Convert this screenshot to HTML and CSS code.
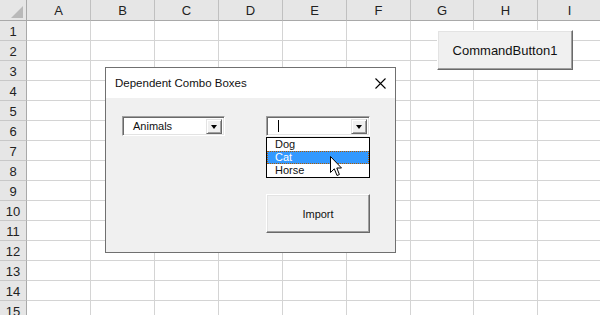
FILE: index.html
```html
<!DOCTYPE html>
<html>
<head>
<meta charset="utf-8">
<link rel="stylesheet" href="styles.css">
</head>
<body>
<div class="sheet">
  <div class="row head">
    <div class="corner"><span class="tri"></span></div>
    <div class="ch">A</div><div class="ch">B</div><div class="ch">C</div><div class="ch">D</div><div class="ch">E</div><div class="ch">F</div><div class="ch">G</div><div class="ch">H</div><div class="ch">I</div>
  </div>
  <div class="row"><div class="rh">1</div><div class="c"></div><div class="c"></div><div class="c"></div><div class="c"></div><div class="c"></div><div class="c"></div><div class="c"></div><div class="c"></div><div class="c"></div></div>
  <div class="row"><div class="rh">2</div><div class="c"></div><div class="c"></div><div class="c"></div><div class="c"></div><div class="c"></div><div class="c"></div><div class="c"></div><div class="c"></div><div class="c"></div></div>
  <div class="row"><div class="rh">3</div><div class="c"></div><div class="c"></div><div class="c"></div><div class="c"></div><div class="c"></div><div class="c"></div><div class="c"></div><div class="c"></div><div class="c"></div></div>
  <div class="row"><div class="rh">4</div><div class="c"></div><div class="c"></div><div class="c"></div><div class="c"></div><div class="c"></div><div class="c"></div><div class="c"></div><div class="c"></div><div class="c"></div></div>
  <div class="row"><div class="rh">5</div><div class="c"></div><div class="c"></div><div class="c"></div><div class="c"></div><div class="c"></div><div class="c"></div><div class="c"></div><div class="c"></div><div class="c"></div></div>
  <div class="row"><div class="rh">6</div><div class="c"></div><div class="c"></div><div class="c"></div><div class="c"></div><div class="c"></div><div class="c"></div><div class="c"></div><div class="c"></div><div class="c"></div></div>
  <div class="row"><div class="rh">7</div><div class="c"></div><div class="c"></div><div class="c"></div><div class="c"></div><div class="c"></div><div class="c"></div><div class="c"></div><div class="c"></div><div class="c"></div></div>
  <div class="row"><div class="rh">8</div><div class="c"></div><div class="c"></div><div class="c"></div><div class="c"></div><div class="c"></div><div class="c"></div><div class="c"></div><div class="c"></div><div class="c"></div></div>
  <div class="row"><div class="rh">9</div><div class="c"></div><div class="c"></div><div class="c"></div><div class="c"></div><div class="c"></div><div class="c"></div><div class="c"></div><div class="c"></div><div class="c"></div></div>
  <div class="row"><div class="rh">10</div><div class="c"></div><div class="c"></div><div class="c"></div><div class="c"></div><div class="c"></div><div class="c"></div><div class="c"></div><div class="c"></div><div class="c"></div></div>
  <div class="row"><div class="rh">11</div><div class="c"></div><div class="c"></div><div class="c"></div><div class="c"></div><div class="c"></div><div class="c"></div><div class="c"></div><div class="c"></div><div class="c"></div></div>
  <div class="row"><div class="rh">12</div><div class="c"></div><div class="c"></div><div class="c"></div><div class="c"></div><div class="c"></div><div class="c"></div><div class="c"></div><div class="c"></div><div class="c"></div></div>
  <div class="row"><div class="rh">13</div><div class="c"></div><div class="c"></div><div class="c"></div><div class="c"></div><div class="c"></div><div class="c"></div><div class="c"></div><div class="c"></div><div class="c"></div></div>
  <div class="row"><div class="rh">14</div><div class="c"></div><div class="c"></div><div class="c"></div><div class="c"></div><div class="c"></div><div class="c"></div><div class="c"></div><div class="c"></div><div class="c"></div></div>
  <div class="row"><div class="rh">15</div><div class="c"></div><div class="c"></div><div class="c"></div><div class="c"></div><div class="c"></div><div class="c"></div><div class="c"></div><div class="c"></div><div class="c"></div></div>

  <button class="cmdbtn">CommandButton1</button>

  <div class="dialog">
    <div class="titlebar">
      <span class="title">Dependent Combo Boxes</span>
      <svg class="close" width="11" height="11" viewBox="0 0 11 11"><path d="M0.5 0.5 L10.5 10.5 M10.5 0.5 L0.5 10.5" stroke="#000" stroke-width="1.1" fill="none"/></svg>
    </div>
    <div class="body">
      <div class="col">
        <div class="combo">
          <span class="val">Animals</span>
          <span class="drop"><span class="arrow"></span></span>
        </div>
      </div>
      <div class="col">
        <div class="combo open">
          <span class="val"><span class="caret"></span></span>
          <span class="drop"><span class="arrow"></span></span>
          <ul class="list">
            <li>Dog</li>
            <li class="sel">Cat</li>
            <li>Horse</li>
          </ul>
          <svg class="pointer" width="13" height="21" viewBox="0 0 13 21"><path d="M0.5 0.5 L0.5 16.5 L4.3 12.8 L7 19.5 L9.4 18.5 L6.8 12 L11.5 12 Z" fill="#fff" stroke="#000" stroke-width="1" stroke-linejoin="miter"/></svg>
        </div>
        <button class="import">Import</button>
      </div>
    </div>
  </div>
</div>
</body>
</html>
```

FILE: styles.css
```css
html, body {
  margin: 0;
  padding: 0;
  background: #fff;
  overflow: hidden;
}
.sheet {
  position: relative;
  width: 600px;
  height: 315px;
  overflow: hidden;
  font-family: "Liberation Sans", Arial, sans-serif;
}
.row {
  display: grid;
  grid-template-columns: 27px repeat(6, 64px) 63px 64px 64px;
  height: 20px;
}
.row.head {
  height: 21px;
}
.c {
  box-sizing: border-box;
  border-right: 1px solid #d4d4d4;
  border-bottom: 1px solid #d4d4d4;
}
.ch, .corner, .rh {
  box-sizing: border-box;
  background: #e6e6e6;
  color: #222;
  font-size: 13px;
  display: flex;
  align-items: center;
  justify-content: center;
}
.ch {
  border-right: 1px solid #c0c0c0;
  border-bottom: 1px solid #a9a9a9;
  padding-top: 1px;
}
.corner {
  position: relative;
  border-right: 1px solid #a9a9a9;
  border-bottom: 1px solid #a9a9a9;
}
.tri {
  position: absolute;
  right: 3px;
  bottom: 2px;
  width: 0;
  height: 0;
  border-left: 12px solid transparent;
  border-bottom: 12px solid #b9b9b9;
}
.rh {
  border-right: 1px solid #a9a9a9;
  border-bottom: 1px solid #c8c8c8;
  padding-top: 1px;
}

.cmdbtn {
  position: absolute;
  left: 437px;
  top: 30px;
  width: 136px;
  height: 40px;
  margin: 0;
  padding: 0;
  box-sizing: border-box;
  background: #f0f0f0;
  border: 1px solid;
  border-color: #fff #6a6a6a #6a6a6a #fff;
  box-shadow: inset -1px -1px 0 #a0a0a0, inset 1px 1px 0 #e3e3e3;
  font-family: "Liberation Sans", Arial, sans-serif;
  font-size: 13px;
  color: #111;
}

.dialog {
  position: absolute;
  left: 105px;
  top: 67px;
  width: 291px;
  height: 186px;
  box-sizing: border-box;
  border: 1px solid #707070;
  background: #f0f0f0;
  display: flex;
  flex-direction: column;
}
.titlebar {
  height: 30px;
  background: #fff;
  display: flex;
  align-items: center;
  justify-content: space-between;
  padding: 0 9px 0 9px;
}
.title {
  font-size: 11.5px;
  color: #111;
}
.close {
  display: block;
  margin-right: 0px;
}
.body {
  flex: 1;
  display: flex;
  gap: 41px;
  padding: 18px 0 0 16px;
}
.col {
  display: flex;
  flex-direction: column;
  width: 104px;
}
.col:first-child {
  width: 103px;
}
.combo {
  position: relative;
  height: 20px;
  box-sizing: border-box;
  background: #fff;
  border: 1px solid;
  border-color: #a0a0a0 #fff #fff #a0a0a0;
  box-shadow: inset 1px 1px 0 #696969, inset -1px -1px 0 #e3e3e3;
  display: flex;
  align-items: center;
  font-size: 11px;
  color: #111;
}
.val {
  flex: 1;
  padding-left: 10px;
  display: flex;
  align-items: center;
}
.caret {
  display: block;
  width: 1px;
  height: 12px;
  background: #000;
  margin-left: 1px;
}
.drop {
  width: 16px;
  height: 15px;
  box-sizing: border-box;
  margin-right: 2px;
  background: #f0f0f0;
  border: 1px solid;
  border-color: #e3e3e3 #696969 #696969 #e3e3e3;
  box-shadow: inset 1px 1px 0 #fff, inset -1px -1px 0 #a0a0a0;
  display: flex;
  align-items: center;
  justify-content: center;
}
.arrow {
  width: 0;
  height: 0;
  border-left: 3.5px solid transparent;
  border-right: 3.5px solid transparent;
  border-top: 4px solid #000;
  margin-top: 1px;
}
.list {
  position: absolute;
  left: -1px;
  top: 20px;
  width: 104px;
  box-sizing: border-box;
  margin: 0;
  padding: 0;
  list-style: none;
  background: #fff;
  border: 1px solid #000;
  font-size: 11px;
  color: #111;
}
.list li {
  height: 13px;
  line-height: 13px;
  padding-left: 8px;
  box-sizing: border-box;
}
.list li.sel {
  background: #3399ff;
  color: #fff;
  border: 1px dotted #b05a00;
  line-height: 11px;
  padding-left: 7px;
}
.pointer {
  position: absolute;
  left: 63px;
  top: 39px;
}
.import {
  margin: 58px 0 0 0;
  width: 104px;
  height: 39px;
  padding: 0;
  box-sizing: border-box;
  background: #f0f0f0;
  border: 1px solid;
  border-color: #fff #696969 #696969 #fff;
  box-shadow: inset -1px -1px 0 #a0a0a0, inset 1px 1px 0 #e3e3e3;
  font-family: "Liberation Sans", Arial, sans-serif;
  font-size: 11px;
  color: #111;
}
```
